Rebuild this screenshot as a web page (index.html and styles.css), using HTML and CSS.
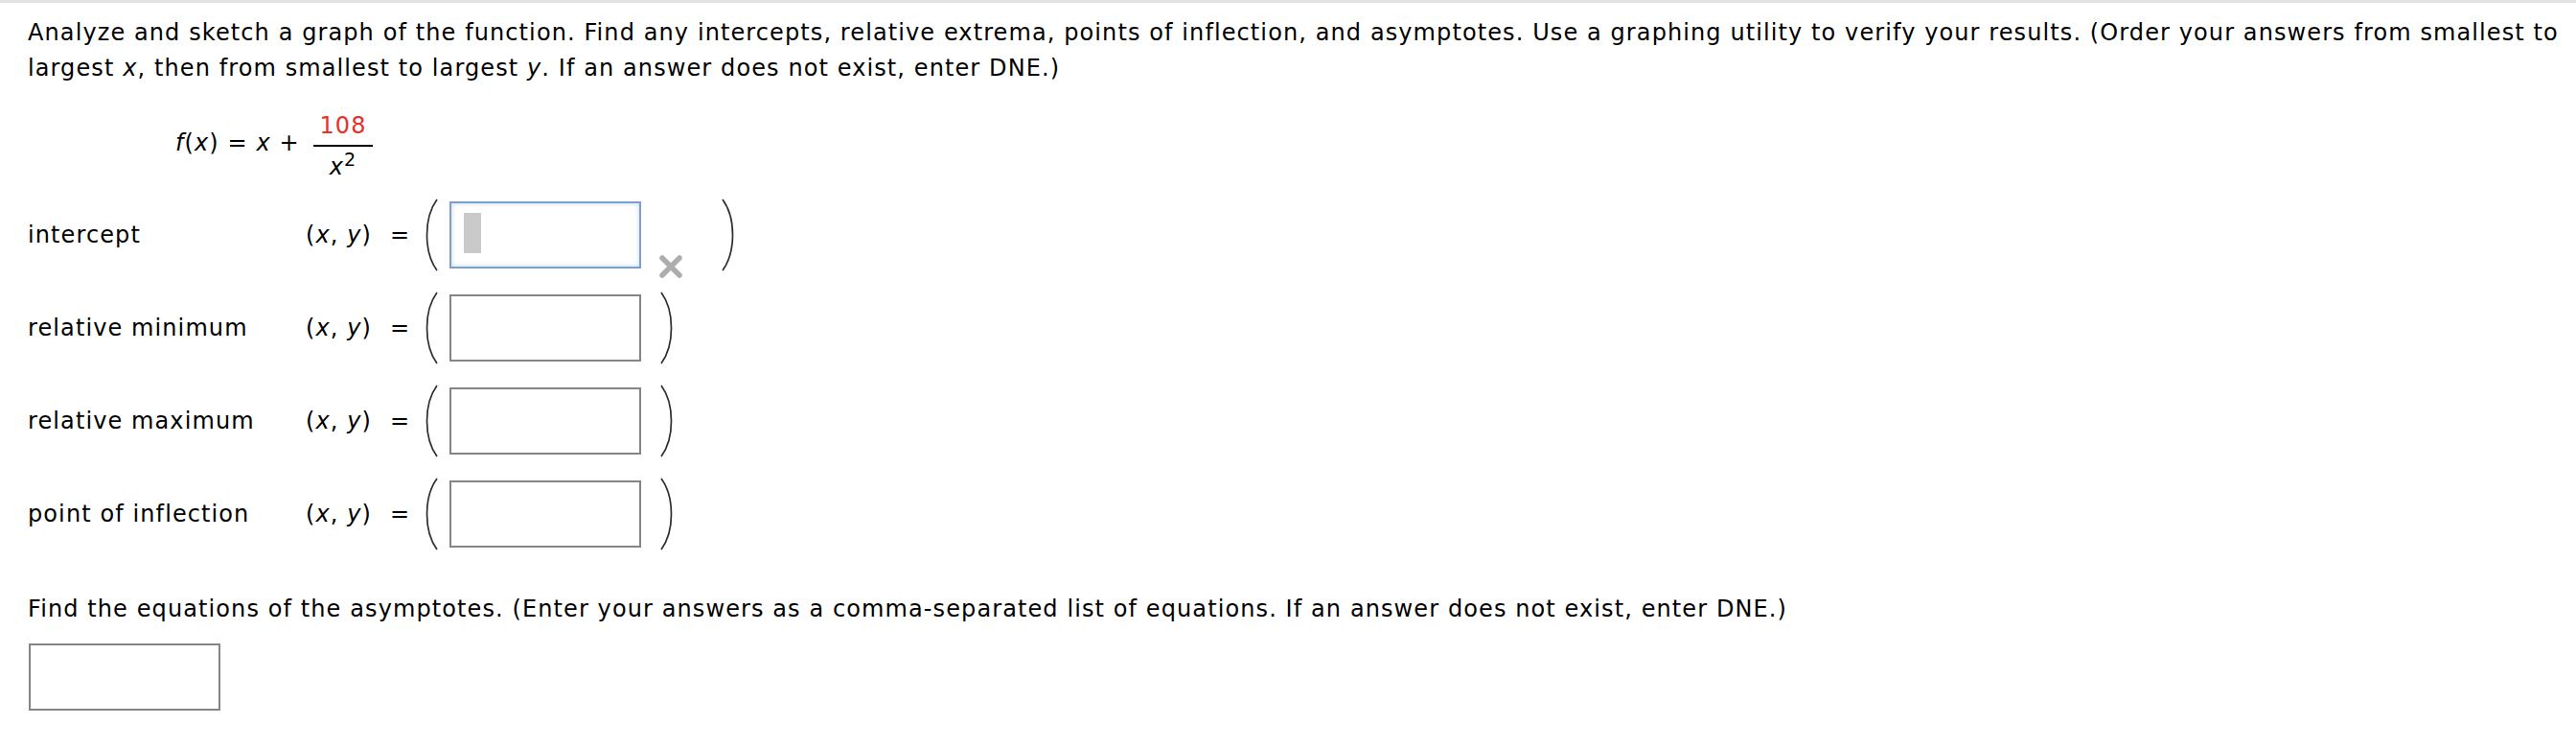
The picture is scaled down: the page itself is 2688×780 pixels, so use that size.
FILE: index.html
```html
<!DOCTYPE html>
<html>
<head>
<meta charset="utf-8">
<link rel="stylesheet" href="styles.css">
</head>
<body>
<div class="topbar"></div>
<div class="page">
  <p class="question">Analyze and sketch a graph of the function. Find any intercepts, relative extrema, points of inflection, and asymptotes. Use a graphing utility to verify your results. (Order your answers from smallest to largest <i>x</i>, then from smallest to largest <i>y</i>. If an answer does not exist, enter DNE.)</p>

  <div class="formula">
    <span class="fx"><i>f</i>(<i>x</i>) = <i>x</i> + </span>
    <span class="frac">
      <span class="num">108</span>
      <span class="den"><i>x</i><sup>2</sup></span>
    </span>
  </div>

  <div class="rows">
    <div class="row">
      <span class="label">intercept</span>
      <span class="xy">(<i>x</i>, <i>y</i>)</span>
      <span class="eq">=</span>
      <svg class="paren" viewBox="0 0 16 76"><path d="M14 1 C0 20 0 56 14 75"/></svg>
      <span class="box focused"><span class="cursor"></span></span>
      <svg class="xicon" viewBox="0 0 28 26"><path d="M5 4 L23 22 M23 4 L5 22"/></svg>
      <svg class="paren rp" viewBox="0 0 16 76"><path d="M2 1 C16 20 16 56 2 75"/></svg>
    </div>
    <div class="row">
      <span class="label">relative minimum</span>
      <span class="xy">(<i>x</i>, <i>y</i>)</span>
      <span class="eq">=</span>
      <svg class="paren" viewBox="0 0 16 76"><path d="M14 1 C0 20 0 56 14 75"/></svg>
      <span class="box"></span>
      <svg class="paren rp" viewBox="0 0 16 76"><path d="M2 1 C16 20 16 56 2 75"/></svg>
    </div>
    <div class="row">
      <span class="label">relative maximum</span>
      <span class="xy">(<i>x</i>, <i>y</i>)</span>
      <span class="eq">=</span>
      <svg class="paren" viewBox="0 0 16 76"><path d="M14 1 C0 20 0 56 14 75"/></svg>
      <span class="box"></span>
      <svg class="paren rp" viewBox="0 0 16 76"><path d="M2 1 C16 20 16 56 2 75"/></svg>
    </div>
    <div class="row">
      <span class="label">point of inflection</span>
      <span class="xy">(<i>x</i>, <i>y</i>)</span>
      <span class="eq">=</span>
      <svg class="paren" viewBox="0 0 16 76"><path d="M14 1 C0 20 0 56 14 75"/></svg>
      <span class="box"></span>
      <svg class="paren rp" viewBox="0 0 16 76"><path d="M2 1 C16 20 16 56 2 75"/></svg>
    </div>
  </div>

  <p class="question asym">Find the equations of the asymptotes. (Enter your answers as a comma-separated list of equations. If an answer does not exist, enter DNE.)</p>
  <span class="box single"></span>
</div>
</body>
</html>
```

FILE: styles.css
```css
html, body {
  margin: 0;
  padding: 0;
  background: #fff;
}
body {
  font-family: "DejaVu Sans", Verdana, sans-serif;
  font-size: 24px;
  letter-spacing: 1.1px;
  color: #000;
}
.topbar {
  height: 3px;
  background: #e2e2e2;
}
.page {
  padding: 0 8px 0 29px;
}
.question {
  margin: 0;
  padding-top: 13px;
  line-height: 37px;
}
.formula {
  display: flex;
  align-items: center;
  margin-left: 154px;
  margin-top: 16px;
  height: 84px;
}
.fx {
  white-space: pre;
  margin-right: 6px;
  margin-top: 2px;
}
.frac {
  display: inline-flex;
  flex-direction: column;
  align-items: center;
  margin-top: 12px;
}
.num {
  color: #e8302a;
  padding: 0 6px 6px;
  border-bottom: 2px solid #000;
  line-height: 28px;
}
.den {
  line-height: 30px;
  padding-top: 6px;
  padding-bottom: 2px;
}
.den sup {
  font-size: 19px;
  vertical-align: 9px;
  line-height: 0;
}
.rows {
  display: flex;
  flex-direction: column;
  gap: 27px;
  margin-top: 20px;
}
.row {
  display: flex;
  align-items: center;
  height: 70px;
}
.label {
  width: 290px;
}
.xy {
  width: 88px;
}
.eq {
  width: 35px;
}
.paren {
  width: 16px;
  height: 76px;
  fill: none;
  stroke: #2e2e2e;
  stroke-width: 1.7;
}
.paren.rp {
  margin-left: 19px;
}
.box {
  display: inline-block;
  box-sizing: border-box;
  width: 200px;
  height: 70px;
  border: 2px solid #858585;
  background: #fff;
  margin-left: 11px;
}
.box.focused {
  border-color: #7c9fcb;
  box-shadow: inset 0 0 4px 1px #d3e2f3;
  padding: 10px 0 0 13px;
}
.cursor {
  display: block;
  width: 18px;
  height: 42px;
  background: #c9c9c9;
}
.xicon {
  width: 28px;
  height: 26px;
  align-self: flex-end;
  margin: 0 0 -11px 17px;
  fill: none;
  stroke: #adadad;
  stroke-width: 5.5;
  stroke-linecap: round;
}
.xicon + .paren.rp {
  margin-left: 38px;
}
.asym {
  padding-top: 46px;
}
.box.single {
  margin: 17px 0 0 1px;
}
```
